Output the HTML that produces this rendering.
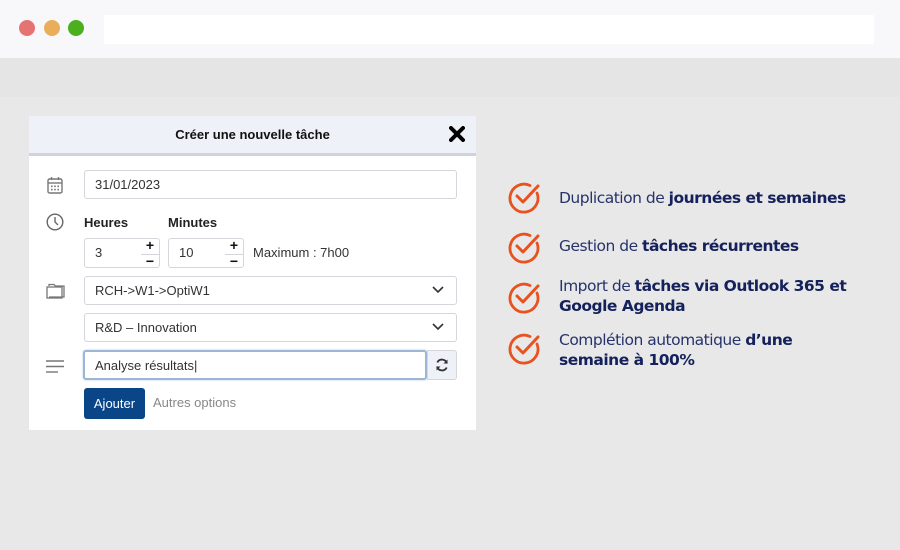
<!DOCTYPE html>
<html><head><meta charset="utf-8"><style>
*{box-sizing:border-box;margin:0;padding:0}
body{width:900px;height:550px;background:#e8e8e8;font-family:"Liberation Sans",sans-serif;position:relative;overflow:hidden}
.top{position:absolute;left:0;top:0;width:900px;height:58px;background:#f8f8fb}
.dot{position:absolute;top:20px;width:16px;height:16px;border-radius:50%}
.url{position:absolute;left:104px;top:15px;width:770px;height:29px;background:#fff}
.band{position:absolute;left:0;top:58px;width:900px;height:39px;background:#e5e5e5}
.dlg{position:absolute;left:29px;top:116px;width:447px;height:314px;background:#fff}
.hd{height:40px;background:#eef1f7;border-bottom:3px solid #cfd3db;text-align:center;font-weight:bold;font-size:13px;line-height:37px;color:#111}
.inp{position:absolute;border:1px solid #d3d6db;border-radius:3px;background:#fff;font-size:13px;color:#333;padding-left:10px}
.lbl{position:absolute;font-size:13px;font-weight:bold;color:#222}
.pm{position:absolute;width:18px;height:14px;font-size:14px;font-weight:bold;text-align:center;line-height:13px;color:#111}
.chev{position:absolute;right:12px;top:9px}
.feat{position:absolute;left:508px;font-family:"DejaVu Sans",sans-serif;font-size:15.5px;color:#26336b;line-height:20px;letter-spacing:-0.5px}
.feat b{color:#14215a}
.chk{position:absolute;left:508px}
</style></head><body>
<div class="top"></div>
<div class="dot" style="left:19px;background:#e57373"></div>
<div class="dot" style="left:44px;background:#e8ae5a"></div>
<div class="dot" style="left:68px;background:#4caf1e"></div>
<div class="url"></div>
<div class="band"></div>
<div class="dlg">
<div class="hd">Créer une nouvelle tâche</div>
<svg style="position:absolute;right:11px;top:10px" width="16" height="16" viewBox="0 0 16 16"><path d="M2 2L14 14M14 2L2 14" stroke="#000" stroke-width="4" stroke-linecap="round"/></svg>
<svg style="position:absolute;left:18px;top:60px" width="16" height="18" viewBox="0 0 16 18"><rect x="1" y="3" width="14" height="14" rx="1.5" fill="none" stroke="#777" stroke-width="1.4"/><line x1="1" y1="7" x2="15" y2="7" stroke="#777" stroke-width="1.4"/><line x1="4.5" y1="1" x2="4.5" y2="4" stroke="#777" stroke-width="1.4"/><line x1="11.5" y1="1" x2="11.5" y2="4" stroke="#777" stroke-width="1.4"/><g fill="#777"><rect x="4" y="9.5" width="1.6" height="1.6"/><rect x="7.2" y="9.5" width="1.6" height="1.6"/><rect x="10.4" y="9.5" width="1.6" height="1.6"/><rect x="4" y="12.8" width="1.6" height="1.6"/><rect x="7.2" y="12.8" width="1.6" height="1.6"/><rect x="10.4" y="12.8" width="1.6" height="1.6"/></g></svg>
<div class="inp" style="left:55px;top:54px;width:373px;height:29px;line-height:27px">31/01/2023</div>
<svg style="position:absolute;left:17px;top:97px" width="18" height="18" viewBox="0 0 18 18"><circle cx="9" cy="9" r="7.8" fill="none" stroke="#666" stroke-width="1.4"/><path d="M9 4v5l3 3" fill="none" stroke="#666" stroke-width="1.4"/></svg>
<div class="lbl" style="left:55px;top:99px">Heures</div>
<div class="lbl" style="left:139px;top:99px">Minutes</div>
<div class="inp" style="left:55px;top:122px;width:76px;height:30px;line-height:28px">3</div>
<div class="pm" style="left:112px;top:123px">+</div><div class="pm" style="left:112px;top:138px;border-top:1px solid #d3d6db">−</div>
<div class="inp" style="left:139px;top:122px;width:76px;height:30px;line-height:28px">10</div>
<div class="pm" style="left:196px;top:123px">+</div><div class="pm" style="left:196px;top:138px;border-top:1px solid #d3d6db">−</div>
<div style="position:absolute;left:224px;top:129px;font-size:13px;color:#333">Maximum : 7h00</div>
<svg style="position:absolute;left:17px;top:167px" width="19" height="16" viewBox="0 0 19 16"><path d="M3 3V1.5h5l1.5 1.5H18v11H3" fill="none" stroke="#777" stroke-width="1.3"/><rect x="1" y="4" width="15" height="11" fill="none" stroke="#777" stroke-width="1.3"/></svg>
<div class="inp" style="left:55px;top:160px;width:373px;height:29px;line-height:27px">RCH-&gt;W1-&gt;OptiW1<svg class="chev" width="12" height="8" viewBox="0 0 12 8"><path d="M1 1l5 5 5-5" fill="none" stroke="#333" stroke-width="1.6"/></svg></div>
<div class="inp" style="left:55px;top:197px;width:373px;height:29px;line-height:27px">R&amp;D – Innovation<svg class="chev" width="12" height="8" viewBox="0 0 12 8"><path d="M1 1l5 5 5-5" fill="none" stroke="#333" stroke-width="1.6"/></svg></div>
<svg style="position:absolute;left:17px;top:244px" width="18" height="13" viewBox="0 0 18 13"><g stroke="#777" stroke-width="1.4"><line x1="0" y1="1" x2="18" y2="1"/><line x1="0" y1="6.5" x2="18" y2="6.5"/><line x1="0" y1="12" x2="12" y2="12"/></g></svg>
<div class="inp" style="left:54px;top:234px;width:344px;height:30px;line-height:28px;border:2px solid #9db6d6;box-shadow:0 0 2px #b8cbe3">Analyse résultats|</div>
<div style="position:absolute;left:398px;top:234px;width:30px;height:30px;background:#eef1f7;border:1px solid #d3d6db;border-radius:0 3px 3px 0"><svg style="position:absolute;left:7px;top:7px" width="14" height="14" viewBox="0 0 14 14"><path d="M12 5.5A5.2 5.2 0 0 0 2.3 4.5M2 8.5A5.2 5.2 0 0 0 11.7 9.5" fill="none" stroke="#333" stroke-width="1.8"/><path d="M12.5 1.5v4h-4z" fill="#333"/><path d="M1.5 12.5v-4h4z" fill="#333"/></svg></div>
<div style="position:absolute;left:55px;top:272px;width:61px;height:31px;background:#0a4587;border-radius:3px;color:#fff;font-size:13px;text-align:center;line-height:31px">Ajouter</div>
<div style="position:absolute;left:124px;top:279px;font-size:13px;color:#888">Autres options</div>
</div>
<svg class="chk" style="top:181px" width="33" height="33" viewBox="0 0 33 33"><path d="M29 12A14 14 0 1 1 22 4.5" fill="none" stroke="#e8521f" stroke-width="2.8" stroke-linecap="round"/><path d="M9 15l6 6L30 5" fill="none" stroke="#e8521f" stroke-width="3" stroke-linecap="round" stroke-linejoin="round"/></svg>
<svg class="chk" style="top:231px" width="33" height="33" viewBox="0 0 33 33"><path d="M29 12A14 14 0 1 1 22 4.5" fill="none" stroke="#e8521f" stroke-width="2.8" stroke-linecap="round"/><path d="M9 15l6 6L30 5" fill="none" stroke="#e8521f" stroke-width="3" stroke-linecap="round" stroke-linejoin="round"/></svg>
<svg class="chk" style="top:281px" width="33" height="33" viewBox="0 0 33 33"><path d="M29 12A14 14 0 1 1 22 4.5" fill="none" stroke="#e8521f" stroke-width="2.8" stroke-linecap="round"/><path d="M9 15l6 6L30 5" fill="none" stroke="#e8521f" stroke-width="3" stroke-linecap="round" stroke-linejoin="round"/></svg>
<svg class="chk" style="top:332px" width="33" height="33" viewBox="0 0 33 33"><path d="M29 12A14 14 0 1 1 22 4.5" fill="none" stroke="#e8521f" stroke-width="2.8" stroke-linecap="round"/><path d="M9 15l6 6L30 5" fill="none" stroke="#e8521f" stroke-width="3" stroke-linecap="round" stroke-linejoin="round"/></svg>
<div class="feat" style="left:559px;top:188px">Duplication de <b>journées et semaines</b></div>
<div class="feat" style="left:559px;top:236px">Gestion de <b>tâches récurrentes</b></div>
<div class="feat" style="left:559px;top:276px">Import de <b>tâches via Outlook 365 et<br>Google Agenda</b></div>
<div class="feat" style="left:559px;top:330px">Complétion automatique <b>d’une<br>semaine à 100%</b></div>
</body></html>
